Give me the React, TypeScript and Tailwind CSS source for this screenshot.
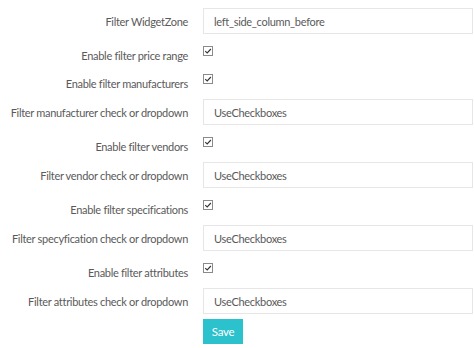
type Row =
  | { kind: "input"; label: string; value: string }
  | { kind: "check"; label: string };

const rows: Row[] = [
  { kind: "input", label: "Filter WidgetZone", value: "left_side_column_before" },
  { kind: "check", label: "Enable filter price range" },
  { kind: "check", label: "Enable filter manufacturers" },
  { kind: "input", label: "Filter manufacturer check or dropdown", value: "UseCheckboxes" },
  { kind: "check", label: "Enable filter vendors" },
  { kind: "input", label: "Filter vendor check or dropdown", value: "UseCheckboxes" },
  { kind: "check", label: "Enable filter specifications" },
  { kind: "input", label: "Filter specyfication check or dropdown", value: "UseCheckboxes" },
  { kind: "check", label: "Enable filter attributes" },
  { kind: "input", label: "Filter attributes check or dropdown", value: "UseCheckboxes" },
];

function CheckBox() {
  return (
    <span className="mt-[2px] flex size-[10px] items-center justify-center border border-[#8a8a8a] bg-white">
      <svg viewBox="0 0 10 10" className="size-[8px]" aria-hidden="true">
        <path d="M1.5 5.2 L4 7.5 L8.6 2.5" fill="none" stroke="#333" strokeWidth="1.4" />
      </svg>
    </span>
  );
}

export default function App() {
  return (
    <div
      className="h-[348px] w-[474px] overflow-hidden bg-white pt-[8px] text-[11px] tracking-[-0.3px] text-[#5a5a5a]"
      style={{ fontFamily: "Lato, 'Liberation Sans', sans-serif" }}
    >
      <div className="flex flex-col gap-[9px]">
        {rows.map((r) =>
          r.kind === "input" ? (
            <div key={r.label} className="flex h-[26px] items-center">
              <label className="w-[188px] shrink-0 whitespace-nowrap text-right leading-[17px]">{r.label}</label>
              <div className="ml-[15px] mr-[1px] flex h-[26px] flex-1 items-center border border-[#e6e6e6] pl-[10px] leading-[17px]">
                {r.value}
              </div>
            </div>
          ) : (
            <div key={r.label} className="flex h-[19px] items-start">
              <label className="w-[188px] shrink-0 whitespace-nowrap pt-[4px] text-right leading-[17px]">{r.label}</label>
              <div className="ml-[15px] pt-[1px]">
                <CheckBox />
              </div>
            </div>
          ),
        )}
      </div>
      <div className="mt-[5px] pl-[203px]">
        <button className="h-[25px] w-[40px] bg-[#2bc1cd] text-[11.5px] text-white">Save</button>
      </div>
    </div>
  );
}
